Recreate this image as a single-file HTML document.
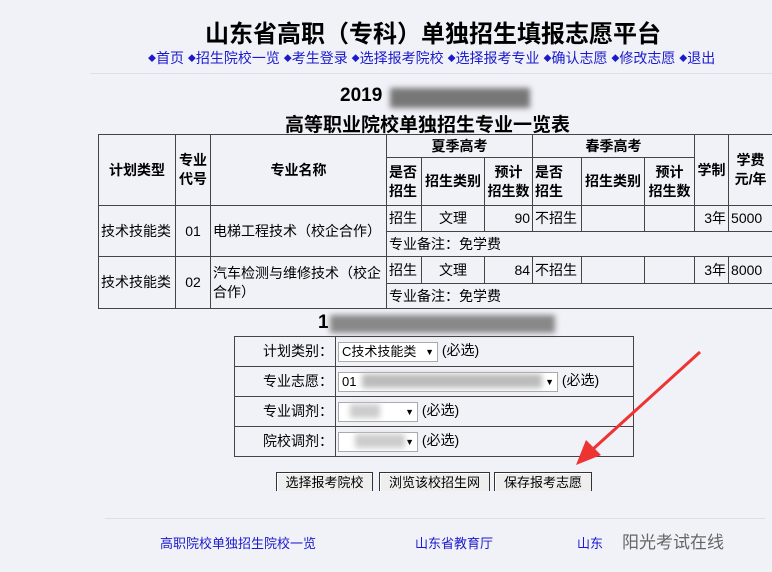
<!DOCTYPE html>
<html><head><meta charset="utf-8"><style>
body{margin:0;width:772px;height:572px;background:#f1f1f8;font-family:"Liberation Sans","Noto Sans CJK SC",sans-serif;position:relative;overflow:hidden;color:#000}
.a{position:absolute;white-space:nowrap}
table{border-collapse:collapse;position:absolute;table-layout:fixed}
td{border:1px solid #444;font-size:14px;padding:0 2px;line-height:19px}
.h td{font-weight:bold}
.blur{position:absolute;filter:blur(3px);background:#999}
.btn{position:absolute;top:472px;height:18px;border:1px solid #333;border-bottom:none;background:#eee;font-size:13px;text-align:center;line-height:20px;box-shadow:inset 1px 1px #fff}
.sel{display:inline-block;border:1px solid #aaa;background:#fff;height:18px;line-height:18px;vertical-align:middle;font-size:13px;padding-left:3px;position:relative}
.sel:after{content:"▼";position:absolute;right:3px;font-size:9px}
.d{font-size:8px;vertical-align:2px}
</style></head><body>
<div class="a" style="left:205px;top:14px;font-size:24px;font-weight:bold;">山东省高职（专科）单独招生填报志愿平台</div>
<div class="a" style="left:148px;top:48px;font-size:14px;color:#1a1acc;"><span class="d">◆</span>首页 <span class="d">◆</span>招生院校一览 <span class="d">◆</span>考生登录 <span class="d">◆</span>选择报考院校 <span class="d">◆</span>选择报考专业 <span class="d">◆</span>确认志愿 <span class="d">◆</span>修改志愿 <span class="d">◆</span>退出</div>
<div class="a" style="left:90px;width:682px;top:73px;border-top:1px solid #dde;"></div>
<div class="a" style="left:340px;top:85px;font-size:19px;font-weight:bold;">2019</div>
<div class="blur" style="left:390px;top:88px;width:140px;height:20px;background:#777"></div>
<div class="a" style="left:285px;top:110px;font-size:19px;font-weight:bold;">高等职业院校单独招生专业一览表</div>
<table style="left:98px;top:134px;width:674px;">
<colgroup><col style="width:77px"><col style="width:35px"><col style="width:176px"><col style="width:35px"><col style="width:63px"><col style="width:48px"><col style="width:49px"><col style="width:63px"><col style="width:50px"><col style="width:34px"><col style="width:44px"></colgroup>
<tr class="h" style="height:23px"><td rowspan="2" align="center">计划类型</td><td rowspan="2" align="center">专业代号</td><td rowspan="2" align="center">专业名称</td><td colspan="3" align="center">夏季高考</td><td colspan="3" align="center">春季高考</td><td rowspan="2" align="center">学制</td><td rowspan="2" align="center">学费元/年</td></tr>
<tr class="h" style="height:48px"><td>是否<br>招生</td><td align="center">招生类别</td><td align="center">预计<br>招生数</td><td>是否<br>招生</td><td align="center">招生类别</td><td align="center">预计<br>招生数</td></tr>
<tr style="height:26px"><td rowspan="2">技术技能类</td><td rowspan="2" align="center">01</td><td rowspan="2">电梯工程技术（校企合作）</td><td>招生</td><td align="center">文理</td><td align="right">90</td><td>不招生</td><td></td><td></td><td align="right">3年</td><td>5000</td></tr>
<tr style="height:25px"><td colspan="8">专业备注：免学费</td></tr>
<tr style="height:27px"><td rowspan="2">技术技能类</td><td rowspan="2" align="center">02</td><td rowspan="2">汽车检测与维修技术（校企合作）</td><td>招生</td><td align="center">文理</td><td align="right">84</td><td>不招生</td><td></td><td></td><td align="right">3年</td><td>8000</td></tr>
<tr style="height:25px"><td colspan="8">专业备注：免学费</td></tr>
</table>
<div class="a" style="left:318px;top:312px;font-size:19px;font-weight:bold;">1</div>
<div class="blur" style="left:330px;top:315px;width:225px;height:18px;background:#888"></div>
<table style="left:234px;top:336px;width:400px;">
<colgroup><col style="width:101px"><col></colgroup>
<tr style="height:30px"><td align="right">计划类别：</td><td><span class="sel" style="width:95px">C技术技能类</span> (必选)</td></tr>
<tr style="height:30px"><td align="right">专业志愿：</td><td><span class="sel" style="width:215px">01</span> (必选)</td></tr>
<tr style="height:30px"><td align="right">专业调剂：</td><td><span class="sel" style="width:75px"></span> (必选)</td></tr>
<tr style="height:30px"><td align="right">院校调剂：</td><td><span class="sel" style="width:75px"></span> (必选)</td></tr>
</table>
<div class="blur" style="left:362px;top:374px;width:180px;height:14px;background:#bbb"></div>
<div class="blur" style="left:350px;top:404px;width:30px;height:14px;background:#ccc"></div>
<div class="blur" style="left:355px;top:434px;width:50px;height:14px;background:#ccc"></div>
<div class="btn" style="left:276px;width:95px">选择报考院校</div>
<div class="btn" style="left:379px;width:109px">浏览该校招生网</div>
<div class="btn" style="left:494px;width:96px">保存报考志愿</div>
<div class="a" style="left:105px;width:660px;top:518px;border-top:1px solid #dde;"></div>
<div class="a" style="left:160px;top:533px;font-size:13px;color:#1a1acc;">高职院校单独招生院校一览</div>
<div class="a" style="left:415px;top:533px;font-size:13px;color:#1a1acc;">山东省教育厅</div>
<div class="a" style="left:577px;top:533px;font-size:13px;color:#1a1acc;">山东</div>
<div class="a" style="left:622px;top:528px;font-size:17px;color:#666;">阳光考试在线</div>
<svg class="a" style="left:0;top:0" width="772" height="572"><path d="M700 352 L592 450" stroke="#e33" stroke-width="3"/><path d="M576 465 L586 440 L601 455 Z" fill="#e33"/></svg>
</body></html>
